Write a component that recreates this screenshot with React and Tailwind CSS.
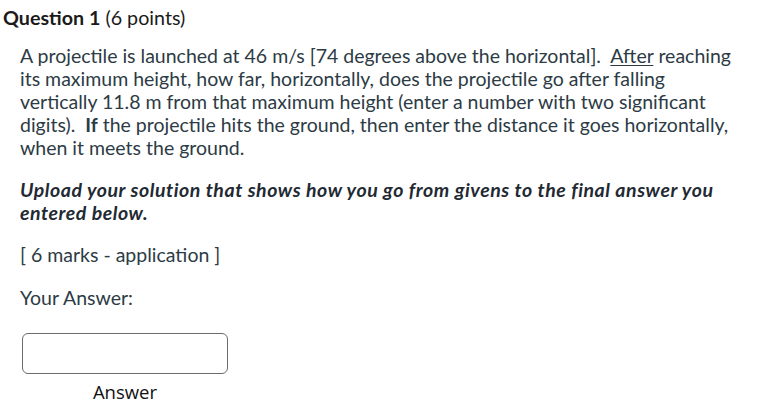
import React from 'react';

const App = () => {
  return (
    <div className="w-[763px] h-[413px] bg-white overflow-hidden font-['Lato','Liberation_Sans',sans-serif] text-[#2d3b45]">
      {/* Header */}
      <div className="pl-[3px] pt-[6px] h-[34px] text-[19.7px] leading-[24px] text-[#1a1a1a]">
        <span className="font-bold">Question 1</span> <span>(6 points)</span>
      </div>

      <div className="pl-[20px] pt-[10px] w-[742px] text-[19.5px] leading-[23px]">
        {/* Question text */}
        <p>
          A projectile is launched at 46 m/s [74 degrees above the horizontal].{'\u00a0 '}
          <span className="underline underline-offset-2">After</span> reaching its maximum height, how far,
          horizontally, does the projectile go after falling vertically 11.8 m from that maximum height
          (enter a number with two significant digits).{'\u00a0 '}
          <span className="font-bold">If</span> the projectile hits the ground, then enter the distance it
          goes horizontally, when it meets the ground.
        </p>

        <p className="mt-[19px] font-bold italic tracking-[0.55px] text-[#1f2a33]">
          Upload your solution that shows how you go from givens to the final answer you entered below.
        </p>

        <p className="mt-[19px]">[ 6 marks - application ]</p>

        <p className="mt-[20px]">Your Answer:</p>

        {/* Answer box */}
        <div className="mt-[24px] w-[206px] flex flex-col items-center">
          <input
            type="text"
            className="ml-[4px] w-[206px] h-[41px] border border-[#6b6b6b] rounded-[6px] bg-white outline-none"
          />
          <span className="mt-[7px] ml-[4px] text-[18.5px] leading-[22px] text-[#111] font-['Open_Sans','Liberation_Sans',sans-serif]">
            Answer
          </span>
        </div>
      </div>
    </div>
  );
};

export default App;
